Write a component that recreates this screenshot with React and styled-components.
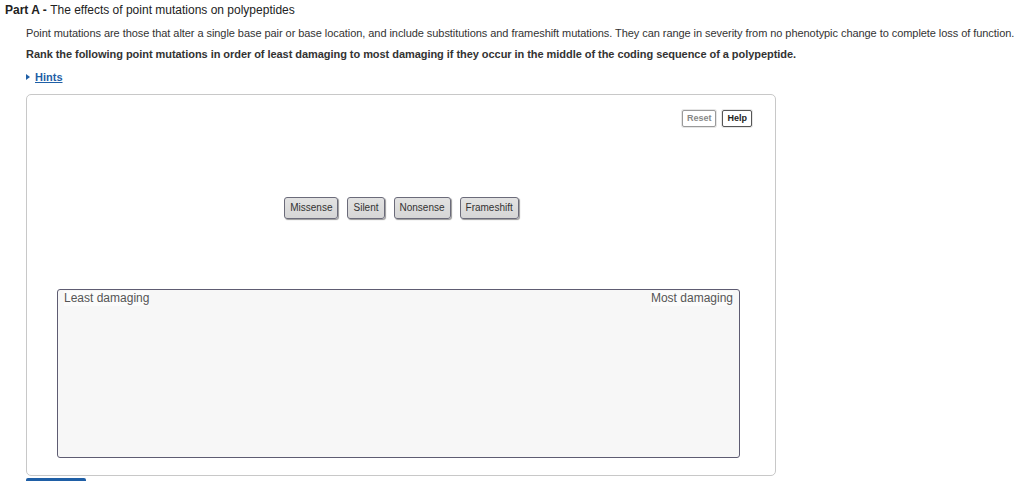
import React from "react";
import styled, { createGlobalStyle } from "styled-components";

const Global = createGlobalStyle`
  html, body { margin: 0; padding: 0; background: #fff; }
  body { font-family: "Liberation Sans", Arial, sans-serif; color: #333; }
`;

const Page = styled.div`
  width: 1024px;
  height: 481px;
  overflow: hidden;
  padding: 3px 0 0 5px;
  box-sizing: border-box;
`;

const Title = styled.div`
  font-size: 12px;
  line-height: 15px;
  color: #222;
  b { font-weight: bold; }
`;

const Body = styled.div`
  padding-left: 21px;
`;

const Para = styled.p`
  margin: 0;
  margin-top: ${(p) => p.$top}px;
  font-size: 11px;
  line-height: 14px;
  letter-spacing: ${(p) => (p.$bold ? "-0.05px" : "-0.06px")};
  color: #333;
  font-weight: ${(p) => (p.$bold ? "bold" : "normal")};
  white-space: nowrap;
`;

const HintsRow = styled.div`
  margin-top: 9px;
  display: flex;
  align-items: center;
  gap: 5px;
  font-size: 11px;
  line-height: 14px;
`;

const Tri = styled.span`
  width: 0;
  height: 0;
  border-top: 3.5px solid transparent;
  border-bottom: 3.5px solid transparent;
  border-left: 4px solid #1f5fa6;
`;

const HintLink = styled.a`
  color: #1f5fa6;
  font-weight: bold;
  text-decoration: underline;
`;

const Panel = styled.div`
  margin-top: 10px;
  width: 750px;
  height: 382px;
  box-sizing: border-box;
  border: 1px solid #c8c8c8;
  border-radius: 5px;
  display: flex;
  flex-direction: column;
  padding: 15px 23px 17px 30px;
`;

const TopBar = styled.div`
  display: flex;
  justify-content: flex-end;
  gap: 6px;
`;

const SmallBtn = styled.div`
  height: 17px;
  box-sizing: border-box;
  padding: 0 4px;
  border: 1px solid ${(p) => (p.$disabled ? "#9a9a9a" : "#555")};
  border-radius: 2px;
  font-size: 9px;
  line-height: 15px;
  font-weight: bold;
  color: ${(p) => (p.$disabled ? "#888" : "#222")};
  background: #fff;
  box-shadow: 0 0 0 1px #e6e6e6;
`;

const ChipRow = styled.div`
  margin-top: 70px;
  display: flex;
  justify-content: center;
  gap: 9px;
  padding-right: 6px;
`;

const Chip = styled.div`
  height: 22px;
  box-sizing: border-box;
  padding: 0 5px;
  border: 1px solid #6b6b7a;
  border-radius: 3px;
  background: linear-gradient(#e2e2e2, #d6d6d6);
  box-shadow: 1px 1px 1px #9a9a9a;
  font-size: 10px;
  line-height: 20px;
  color: #333;
`;

const Zone = styled.div`
  margin-top: 70px;
  width: 683px;
  height: 170px;
  box-sizing: border-box;
  border: 1px solid #5e5c72;
  border-radius: 3px;
  background: #f7f7f7;
  display: flex;
  justify-content: space-between;
  align-items: flex-start;
  padding: 1px 6px 0 6px;
  font-size: 12px;
  line-height: 15px;
  color: #555;
`;

const ZoneLabel = styled.span`
  background: #fbfbfb;
`;

const BottomBar = styled.div`
  margin-top: 2px;
  width: 60px;
  height: 4px;
  border-radius: 2px 2px 0 0;
  background: #1f5fa6;
`;

export default function App() {
  return (
    <>
      <Global />
      <Page>
        <Title>
          <b>Part A - </b>The effects of point mutations on polypeptides
        </Title>
        <Body>
          <Para $top={8}>
            Point mutations are those that alter a single base pair or base location, and include substitutions and frameshift mutations. They can range in severity from no phenotypic change to complete loss of function.
          </Para>
          <Para $top={7} $bold>
            Rank the following point mutations in order of least damaging to most damaging if they occur in the middle of the coding sequence of a polypeptide.
          </Para>
          <HintsRow>
            <Tri />
            <HintLink>Hints</HintLink>
          </HintsRow>
          <Panel>
            <TopBar>
              <SmallBtn $disabled>Reset</SmallBtn>
              <SmallBtn>Help</SmallBtn>
            </TopBar>
            <ChipRow>
              <Chip>Missense</Chip>
              <Chip>Silent</Chip>
              <Chip>Nonsense</Chip>
              <Chip>Frameshift</Chip>
            </ChipRow>
            <Zone>
              <ZoneLabel>Least damaging</ZoneLabel>
              <ZoneLabel>Most damaging</ZoneLabel>
            </Zone>
          </Panel>
          <BottomBar />
        </Body>
      </Page>
    </>
  );
}
